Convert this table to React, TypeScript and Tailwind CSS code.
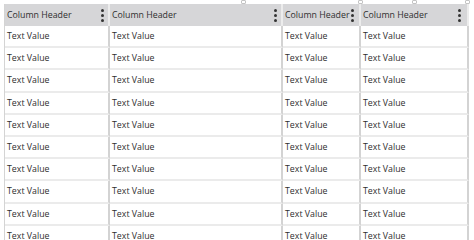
import React from "react";

type Col = { width: string; pad: string };

const columns: Col[] = [
  { width: "w-[105px]", pad: "pr-[4px]" },
  { width: "w-[173px]", pad: "pr-[4px]" },
  { width: "w-[78px]", pad: "pr-[5px]" },
  { width: "w-[108px]", pad: "pr-[6px]" },
];

const rowCount = 10;

const Kebab = () => (
  <span className="flex flex-col gap-[2px] items-center">
    <span className="block w-[3px] h-[3px] rounded-full bg-[#333]" />
    <span className="block w-[3px] h-[3px] rounded-full bg-[#333]" />
    <span className="block w-[3px] h-[3px] rounded-full bg-[#333]" />
  </span>
);

const Handle = ({ left }: { left: string }) => (
  <span
    className={`absolute top-[0px] ${left} w-[5px] h-[4px] border border-[#c4c4c4] bg-white rounded-[1px]`}
  />
);

export default function App() {
  return (
    <div
      className="relative w-[474px] h-[240px] overflow-hidden bg-white pt-[4px] pl-[4px] text-[#2f2f2f]"
      style={{ fontFamily: '"Open Sans", "Noto Sans", sans-serif' }}
    >
      <Handle left="left-[241px]" />
      <Handle left="left-[358px]" />
      <Handle left="left-[412px]" />
      <Handle left="left-[465px]" />

      <div className="flex border-l border-[#d4d4d4]">
        {columns.map((col, ci) => (
          <div key={ci} className={`${col.width} flex flex-col shrink-0`}>
            {/* header */}
            <div
              className={`h-[22px] flex items-center justify-between bg-[#d6d6d8] pl-[2px] ${col.pad} border-r-2 border-[#ececec] text-[8.8px]`}
            >
              <span className="pt-[1px]">Column Header</span>
              <Kebab />
            </div>
            {/* body */}
            {Array.from({ length: rowCount }).map((_, ri) => (
              <div
                key={ri}
                className="h-[22.2px] shrink-0 flex items-center pl-[2px] pt-[1px] border-b-2 border-r-2 border-b-[#ebebeb] border-r-[#d3d3d3] text-[8.8px] bg-white"
              >
                Text Value
              </div>
            ))}
          </div>
        ))}
      </div>
    </div>
  );
}
